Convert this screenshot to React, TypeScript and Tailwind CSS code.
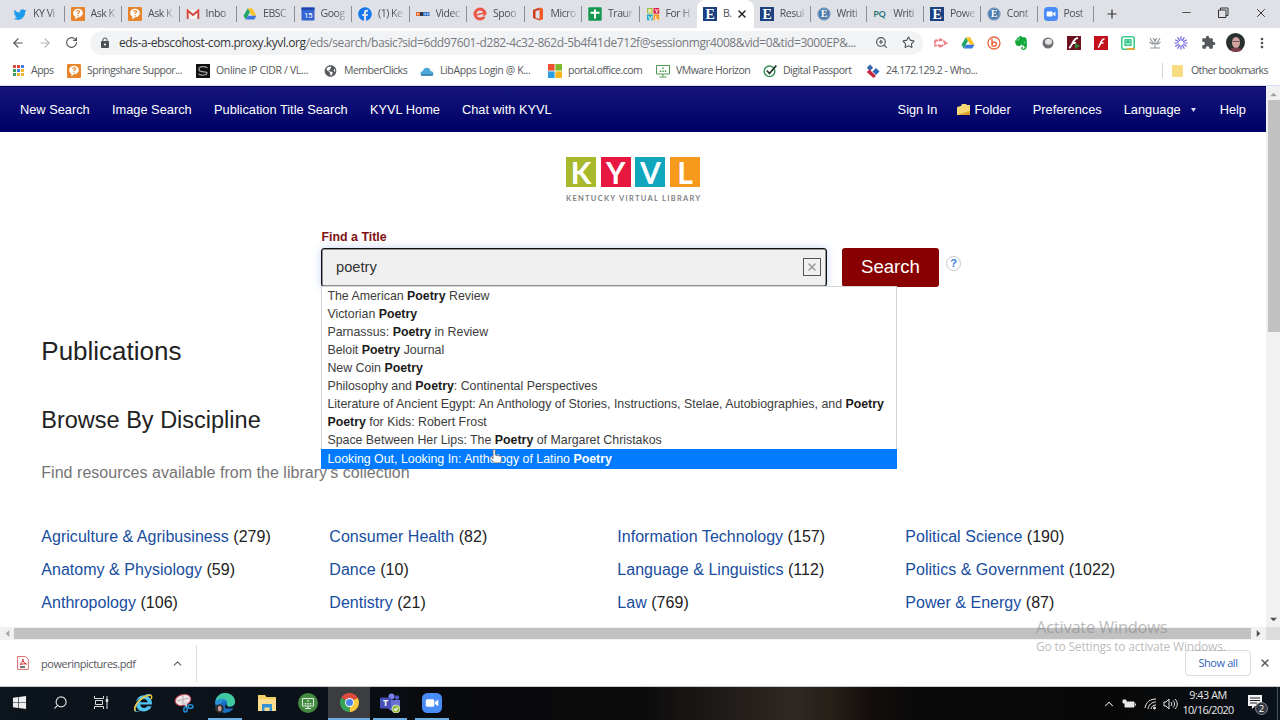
import React from 'react';
import { ArrowLeft, ArrowRight, ChevronUp, Minus, Plus, RotateCw, Search, Star, X, ZoomIn } from 'lucide-react';
import { FaFacebook, FaGlobeAmericas, FaInternetExplorer, FaTwitter, FaWindows } from 'react-icons/fa';
import { MdExtension, MdLock, MdMoreVert } from 'react-icons/md';
import { SiEvernote } from 'react-icons/si';

type Tab = { label: string; icon: React.ReactNode; active?: boolean };

const svg = 'h-[14px] w-[14px] shrink-0';

const AskIcon = () => (
  <svg className={svg} viewBox="0 0 14 14">
    <rect width="14" height="14" rx="1" fill="#e8842c" />
    <path d="M7 1.800c2.900 0 4.800 1.700 4.800 4.200S9.900 10.200 7 10.200L4.400 12.600V9.700C3 9 2.200 7.700 2.200 6 2.200 3.500 4.100 1.800 7 1.800z" fill="#fff" />
    <path d="M5.600 4.700c.2-1.600 3-1.500 2.900.1C8.400 5.800 7 5.800 7 7.100" fill="none" stroke="#e8842c" strokeWidth="1.200" />
    <circle cx="7" cy="8.700" r=".7" fill="#e8842c" />
  </svg>
);

const GmailIcon = () => (
  <svg className={svg} viewBox="0 0 14 14">
    <rect x="1" y="3" width="12" height="9" fill="#f4f1f1" />
    <path d="M1.700 12V3.600L7 8l5.300-4.400V12" fill="none" stroke="#d5473b" strokeWidth="1.900" />
  </svg>
);

const DriveIcon = () => (
  <svg className={svg} viewBox="0 0 14 14">
    <path d="M4.800 1.200L.5 8.700l2.200 3.800L7 5z" fill="#23a566" />
    <path d="M4.800 1.200h4.400l4.300 7.500H9.100z" fill="#fbc52d" />
    <path d="M4.900 8.700h8.600l-2.200 3.800H2.700z" fill="#3f77e0" />
  </svg>
);

const CalendarIcon = () => (
  <svg className={svg} viewBox="0 0 14 14">
    <rect x=".5" y=".5" width="13" height="13" rx="1" fill="#3464d4" />
    <rect x=".5" y=".5" width="13" height="2.500" fill="#1c46ac" />
    <text x="7" y="11" textAnchor="middle" fontSize="8" fontFamily="Roboto, sans-serif" fill="#fff">15</text>
  </svg>
);

const VideoIcon = () => (
  <svg className={svg} viewBox="0 0 14 14">
    <rect y="5" width="4" height="4" fill="#e36b2c" />
    <rect x="4" y="5" width="3" height="4" fill="#33363f" />
    <rect x="7" y="5" width="6.500" height="4" fill="#3d7bd0" />
    <path d="M1 7h2m5.500 0H10m1 0h1.500" stroke="#fff" />
  </svg>
);

const SpoolIcon = () => (
  <svg className={svg} viewBox="0 0 14 14">
    <circle cx="7" cy="7" r="5" fill="none" stroke="#ec5745" strokeWidth="3" />
    <path d="M3 8l8-2" stroke="#ec5745" strokeWidth="1.600" />
    <path d="M10 9.500l4-2.200v3z" fill="#dfe1e6" />
  </svg>
);

const OfficeIcon = () => (
  <svg className={svg} viewBox="0 0 14 14">
    <path d="M8.500.5L2 3v8l6.500 2.500V11.700L4.500 11V4l4-1z" fill="#d13a1c" />
    <path d="M8.500.5L12 1.800v10.400l-3.500 1.300z" fill="#ef5a24" />
  </svg>
);

const SheetsIcon = () => (
  <svg className={svg} viewBox="0 0 14 14">
    <rect x=".3" y=".3" width="13.400" height="13.400" rx="1" fill="#12994f" />
    <path d="M7 2.500v9M2.500 5.800h9" stroke="#fff" strokeWidth="2" />
  </svg>
);

const KyvlIcon = () => (
  <svg className={svg} viewBox="0 0 14 14" fontSize="6" fontFamily="Lato, sans-serif" fontWeight="700" fill="#fff" textAnchor="middle">
    <rect x="1" y="1" width="5.700" height="5.700" fill="#a9bf3a" />
    <rect x="7.500" y="1" width="5.700" height="5.700" fill="#e2203f" />
    <rect x="1" y="7.500" width="5.700" height="5.700" fill="#20a8c2" />
    <rect x="7.500" y="7.500" width="5.700" height="5.700" fill="#f59c20" />
    <text x="3.900" y="6">K</text>
    <text x="10.400" y="6">Y</text>
    <text x="3.900" y="12.500">V</text>
    <text x="10.400" y="12.500">L</text>
  </svg>
);

const EbscoIcon = () => (
  <svg className={svg} viewBox="0 0 14 14">
    <rect width="14" height="14" fill="#1b4180" />
    <text x="7" y="12" textAnchor="middle" fontSize="14" fontWeight="700" fontFamily="Liberation Serif, serif" fill="#fff">E</text>
  </svg>
);

const EbscoRoundIcon = () => (
  <svg className={svg} viewBox="0 0 14 14">
    <circle cx="7" cy="7" r="6.500" fill="#4a79aa" />
    <circle cx="7" cy="7" r="5.600" fill="none" stroke="#8fb2d2" strokeWidth=".7" />
    <text x="7" y="10.300" textAnchor="middle" fontSize="9.500" fontWeight="700" fontFamily="Liberation Serif, serif" fill="#fff">E</text>
  </svg>
);

const PqIcon = () => (
  <span className="w-[14px] shrink-0 text-[9.500px] font-semibold tracking-[-0.500px] text-[#1d7478]">PQ</span>
);

const ZoomIcon = ({ className = svg }: { className?: string }) => (
  <svg className={className} viewBox="0 0 20 20">
    <rect width="20" height="20" rx="5.500" fill="#4a8cf7" />
    <rect x="3.800" y="6.300" width="8.500" height="7.400" rx="1.500" fill="#fff" />
    <path d="M13 9l3.300-2.300v6.600L13 11z" fill="#fff" />
  </svg>
);

const VmIcon = () => (
  <svg className={svg} viewBox="0 0 14 14" fill="none" stroke="#4f9a52">
    <path d="M.5 1.500h13v8.500H.5zM7 10v2.500M3.500 13h7" />
    <path d="M7 3.500v1.500M4.500 6.500v1.500M7 6.500v1.500M9.500 6.500v1.500" strokeWidth="1.500" />
  </svg>
);

const tabs: Tab[] = [
  { label: 'KY Vi', icon: <FaTwitter className="h-[13px] w-[14px] shrink-0 text-[#1c9cea]" /> },
  { label: 'Ask K', icon: <AskIcon /> },
  { label: 'Ask K', icon: <AskIcon /> },
  { label: 'Inbo', icon: <GmailIcon /> },
  { label: 'EBSC', icon: <DriveIcon /> },
  { label: 'Goog', icon: <CalendarIcon /> },
  { label: '(1) Ke', icon: <FaFacebook className="h-[14px] w-[14px] shrink-0 text-[#1578ee]" /> },
  { label: 'Videc', icon: <VideoIcon /> },
  { label: 'Spoo', icon: <SpoolIcon /> },
  { label: 'Micro', icon: <OfficeIcon /> },
  { label: 'Traur', icon: <SheetsIcon /> },
  { label: 'For H', icon: <KyvlIcon /> },
  { label: 'B.', icon: <EbscoIcon />, active: true },
  { label: 'Resul', icon: <EbscoIcon /> },
  { label: 'Writi', icon: <EbscoRoundIcon /> },
  { label: 'Writi', icon: <PqIcon /> },
  { label: 'Powe', icon: <EbscoIcon /> },
  { label: 'Cont', icon: <EbscoRoundIcon /> },
  { label: 'Post', icon: <ZoomIcon /> },
];

const activeIndex = tabs.findIndex((tab) => tab.active);

function TabStrip() {
  return (
    <div className="flex h-7 bg-[#dfe1e6] pl-[7px] text-[10.500px] tracking-[-0.450px] text-[#4b4e53]">
      {tabs.map((tab, i) => {
        const divider = !tab.active && !tabs[i + 1]?.active;
        return (
          <div
            key={i}
            className={`flex shrink-0 items-center pl-[6px] ${i < activeIndex ? 'w-[57.500px]' : 'w-[56.750px]'} ${
              tab.active ? 'rounded-t-lg bg-white' : ''
            }`}
          >
            {tab.icon}
            <span
              className={`ml-[6px] whitespace-nowrap ${
                tab.active ? 'w-[12px]' : 'w-[25px] [mask-image:linear-gradient(to_right,#000_60%,#0003)]'
              }`}
            >
              {tab.label}
            </span>
            {tab.active && <X className="ml-px h-[12px] w-[12px] text-[#202124]" strokeWidth={3} />}
            {divider && <span className="ml-auto h-4 w-px bg-[#8b8d92]" />}
          </div>
        );
      })}
      <Plus className="ml-[11px] mt-[7px] h-[14px] w-[14px] text-[#333]" />
      <div className="ml-auto flex items-start gap-[24px] pr-[12px] pt-[6px] text-[#333]">
        <Minus className="h-[13px] w-[13px]" strokeWidth={1.500} />
        <svg className="h-[13px] w-[13px]" viewBox="0 0 13 13" fill="none" stroke="currentColor">
          <path d="M1.500 4h7.500v7.500H1.500zM3.500 4V2H11v7.500h-2" />
        </svg>
        <X className="h-[14px] w-[14px]" strokeWidth={1.700} />
      </div>
    </div>
  );
}

const extensions: React.ReactNode[] = [
  <svg className={svg} viewBox="0 0 14 14" fill="none" stroke="#ee7780" strokeWidth="1.800">
    <path d="M1 4.500h5M1 4.500v5h5M6 2.500v2.500M6 9v2.500M6 3L12.500 7 6 11" strokeDasharray="3 .8" />
  </svg>,
  <DriveIcon />,
  <svg className={svg} viewBox="0 0 14 14" fill="none" stroke="#e8663e" strokeWidth="1.300">
    <circle cx="7" cy="7" r="6" />
    <path d="M5 3v6.500c1.500 1.500 4.500.8 4.500-1.500S6.500 5.500 5.500 7.500" strokeWidth="1.500" />
  </svg>,
  <SiEvernote className="h-[14px] w-[14px] text-[#12a83c]" />,
  <svg className={svg} viewBox="0 0 14 14">
    <circle cx="7" cy="7" r="5.500" fill="#6e7073" />
    <ellipse cx="7.500" cy="5.800" rx="3.500" ry="3" fill="#e3e4e6" />
  </svg>,
  <svg className={svg} viewBox="0 0 14 14">
    <rect width="14" height="14" fill="#6f1220" />
    <path d="M2 12C5 11 6 2 11 2M5 7h4" fill="none" stroke="#fff" strokeWidth="1.800" />
    <path d="M8 7l5 3-5 3z" fill="#2d8a3b" />
  </svg>,
  <svg className={svg} viewBox="0 0 14 14">
    <rect width="14" height="14" fill="#c3121c" />
    <path d="M4 11.500C6.500 11 6 3 10.500 3M6 7h3.500" fill="none" stroke="#fff" strokeWidth="1.600" />
  </svg>,
  <svg className={svg} viewBox="0 0 14 14">
    <rect x=".8" y=".8" width="12.400" height="12.400" rx="2" fill="#fff" stroke="#3cc98d" strokeWidth="1.600" />
    <rect x="3.200" y="3" width="7.600" height="7" rx="1" fill="#3cc98d" />
    <path d="M5 4.500v1M9 4.500v1M4.800 7c.8 1.800 3.600 1.800 4.400 0" fill="none" stroke="#fff" />
    <path d="M6 13h8" stroke="#efa22f" strokeWidth="1.800" />
  </svg>,
  <svg className={svg} viewBox="0 0 14 14" fill="none" stroke="#8f9698" strokeWidth="1.100">
    <path d="M7 3v9M2 2l3 5 2 1 2-1 3-5M1.500 6L5 8.500M12.500 6L9 8.500M2 12h10M5 2l2 3 2-3" />
  </svg>,
  <svg className={svg} viewBox="0 0 14 14" fill="none" stroke="#6d62de" strokeWidth="1.200">
    <path d="M7 .3v4.200M7 9.500v4.200M.3 7h4.200M9.500 7h4.200M3.650 1.200l2.100 3.630M8.250 9.170l2.100 3.630M1.200 3.650l3.630 2.100M9.170 8.250l3.630 2.100M1.200 10.350l3.630-2.100M9.170 5.750l3.630-2.100M3.650 12.800l2.100-3.630M8.250 4.830l2.100-3.630" />
  </svg>,
  <MdExtension className="h-[15px] w-[15px] text-[#55585c]" />,
];

function Toolbar() {
  return (
    <div className="flex h-[29px] items-center bg-white text-[#4d5054]">
      <ArrowLeft className="ml-[11px] h-[14px] w-[14px]" />
      <ArrowRight className="ml-[13px] h-[14px] w-[14px] text-[#b3b5b8]" />
      <RotateCw className="ml-[13px] h-[13px] w-[13px]" />
      <div className="ml-[12px] flex h-[24px] w-[833px] items-center rounded-full bg-[#f2f3f5]">
        <MdLock className="ml-[9px] h-[12px] w-[12px]" />
        <span className="ml-[8px] w-[740px] whitespace-nowrap text-[12px] tracking-[-0.410px] text-[#77797d]">
          <span className="text-[#35373a]">eds-a-ebscohost-com.proxy.kyvl.org</span>
          /eds/search/basic?sid=6dd97601-d282-4c32-862d-5b4f41de712f@sessionmgr4008&amp;vid=0&amp;tid=3000EP&amp;...
        </span>
        <ZoomIn className="ml-[16px] h-[13px] w-[13px] shrink-0" />
        <Star className="ml-[14px] h-[13px] w-[13px] shrink-0" />
      </div>
      <div className="ml-[11px] flex items-center gap-[12.700px]">
        {extensions.map((ext, i) => (
          <React.Fragment key={i}>{ext}</React.Fragment>
        ))}
      </div>
      <svg className="ml-[10px] h-[19px] w-[19px]" viewBox="0 0 19 19">
        <circle cx="9.500" cy="9.500" r="9.500" fill="#29312e" />
        <ellipse cx="10" cy="9.500" rx="4" ry="5.500" fill="#d4a3a0" />
        <path d="M4 17c2-3 10-3 12 0-3 2.500-9 2.500-12 0z" fill="#7d3e4c" />
        <path d="M6.500 8.500h7" stroke="#5d4546" strokeWidth=".8" />
      </svg>
      <MdMoreVert className="ml-[9px] h-[16px] w-[16px]" />
    </div>
  );
}

function Bookmarks() {
  return (
    <div className="flex h-[29px] items-center whitespace-nowrap border-b border-[#d9dcfb] bg-white pb-px text-[10.500px] tracking-[-0.500px] text-[#55585c]">
      <div className="ml-[13px] flex w-[54px] items-center gap-[7px]">
        <svg className="h-[11px] w-[11px]" viewBox="0 0 11 11">
          <path d="M0 1.500h3M4 1.500h3" stroke="#dd4b3e" strokeWidth="3" />
          <path d="M8 1.500h3M4 5.500h3" stroke="#4b7fd9" strokeWidth="3" />
          <path d="M0 5.500h3M0 9.500h3" stroke="#38a05a" strokeWidth="3" />
          <path d="M8 5.500h3M4 9.500h7" stroke="#ecb431" strokeWidth="3" strokeDasharray="3 1" />
        </svg>
        Apps
      </div>
      <div className="flex w-[129px] items-center gap-[6px]">
        <AskIcon />
        Springshare Suppor...
      </div>
      <div className="flex w-[128px] items-center gap-[6px] tracking-[-0.350px]">
        <svg className={svg} viewBox="0 0 14 14">
          <rect width="14" height="14" fill="#111" />
          <path d="M11.500 4C7 1.500 2 3 3 6s8 1 8 3-5 3-8.500 1" fill="none" stroke="#a7a7a7" strokeWidth="1.200" />
        </svg>
        Online IP CIDR / VL...
      </div>
      <div className="flex w-[96px] items-center gap-[7px]">
        <FaGlobeAmericas className="h-[12px] w-[13px] text-[#56595d]" />
        MemberClicks
      </div>
      <div className="flex w-[128px] items-center gap-[6px] tracking-[-0.380px]">
        <svg className={svg} viewBox="0 0 14 14">
          <path d="M3 11.500C-.5 11.500 0 7 3 7c.5-4 7-4.500 7.500 0C14 7 14.500 11.500 11 11.500z" fill="#4ea7d9" />
          <path d="M1 11h12" stroke="#357cae" strokeWidth="1.500" />
        </svg>
        LibApps Login @ K...
      </div>
      <div className="flex w-[108px] items-center gap-[6px]">
        <svg className={svg} viewBox="0 0 14 14">
          <rect width="6.600" height="6.600" fill="#ec5130" />
          <rect x="7.400" width="6.600" height="6.600" fill="#7eb82d" />
          <rect y="7.400" width="6.600" height="6.600" fill="#2b9de3" />
          <rect x="7.400" y="7.400" width="6.600" height="6.600" fill="#f8b61a" />
        </svg>
        portal.office.com
      </div>
      <div className="flex w-[107px] items-center gap-[6px]">
        <VmIcon />
        VMware Horizon
      </div>
      <div className="flex w-[103px] items-center gap-[6px]">
        <svg className={svg} viewBox="0 0 14 14" fill="none">
          <circle cx="6.500" cy="7.300" r="5.300" stroke="#308d54" strokeWidth="1.400" />
          <path d="M3.800 6.500L6.500 9.500l6.800-8" stroke="#1d3328" strokeWidth="1.700" />
        </svg>
        Digital Passport
      </div>
      <div className="flex w-[120px] items-center gap-[6px]">
        <svg className={svg} viewBox="0 0 14 14">
          <path d="M4 .5l3.200 3.200L4 6.900.8 3.700z" fill="#3565ab" />
          <path d="M10 4l3.500 3.500L10 11 6.500 7.500z" fill="#2b68b5" />
          <path d="M3.500 5.500L10 12l-2.500 2L.8 8z" fill="#c8233c" />
        </svg>
        24.172.129.2 - Who...
      </div>
      <div className="ml-auto flex w-[118px] items-center border-l border-[#d3d5d8] pl-[9px] tracking-[-0.620px]">
        <span className="mr-[8px] h-[12px] w-[11px] rounded-[1px] bg-[#f7dc82]" />
        <span>Other bookmarks</span>
      </div>
    </div>
  );
}

function SiteNav() {
  return (
    <nav className="flex h-[46px] items-center border-t border-[#02024c] bg-linear-to-b from-[#15157a] to-[#000066] pl-[20px] pr-[20px] text-[12.800px] text-white">
      <span className="w-[92px]">New Search</span>
      <span className="w-[102px]">Image Search</span>
      <span className="w-[156px]">Publication Title Search</span>
      <span className="w-[92px]">KYVL Home</span>
      <span>Chat with KYVL</span>
      <span className="ml-auto">Sign In</span>
      <span className="ml-[20px] flex items-center gap-[3px]">
        <svg className="h-[13px] w-[14px]" viewBox="0 0 14 13">
          <path d="M0 4l4-1 1-2h4l1 1h3v10H0z" fill="#f3d873" />
          <path d="M0 12L13 8v4z" fill="#dba52d" />
        </svg>
        Folder
      </span>
      <span className="ml-[22px]">Preferences</span>
      <span className="ml-[22px] flex items-center">
        Language
        <svg className="ml-[10px] h-[4px] w-[5px]" viewBox="0 0 5 4">
          <path d="M0 0h5L2.500 4z" fill="#dcdcf2" />
        </svg>
      </span>
      <span className="ml-[24px]">Help</span>
    </nav>
  );
}

const suggestions: [string, string][] = [
  ['The American ', ' Review'],
  ['Victorian ', ''],
  ['Parnassus: ', ' in Review'],
  ['Beloit ', ' Journal'],
  ['New Coin ', ''],
  ['Philosophy and ', ': Continental Perspectives'],
  ['Literature of Ancient Egypt: An Anthology of Stories, Instructions, Stelae, Autobiographies, and ', ''],
  ['', ' for Kids: Robert Frost'],
  ['Space Between Her Lips: The ', ' of Margaret Christakos'],
];

function SuggestionMenu() {
  return (
    <ul className="absolute left-0 top-full z-10 -mt-px w-[576px] whitespace-nowrap border border-[#d4d4d8] bg-white text-[12.370px] text-[#3c3c3c]">
      {suggestions.map(([before, after]) => (
        <li key={before + after} className="h-[18px] whitespace-pre pl-[5.400px] leading-[19px]">
          {before}
          <b className="text-[#1b1b1b]">Poetry</b>
          {after}
        </li>
      ))}
      <li className="-mx-px -mb-px h-[20px] bg-[#007bff] pl-[6.400px] leading-[21px] text-white">
        Looking Out, Looking In: Anthology of Latino <b>Poetry</b>
      </li>
      <svg className="absolute left-[167px] top-[161px] h-[19px] w-[14px]" viewBox="0 0 14 19">
        <path
          d="M4 9V2.500C4 .8 6.300.8 6.300 2.500V7l5 1c1.200.3 1.500 1 1.300 2.200L11.800 15H5.500L1 10.500C.2 9.300 1.500 8.500 2.500 9.300L4 10.500z"
          fill="#fff"
          stroke="#59606b"
          strokeWidth=".8"
        />
      </svg>
    </ul>
  );
}

const logo = [
  { letter: 'K', color: 'bg-[#a9b92c]' },
  { letter: 'Y', color: 'bg-[#e8173f]' },
  { letter: 'V', color: 'bg-[#10a6bd]' },
  { letter: 'L', color: 'bg-[#f69a1d]' },
];

function Logo() {
  return (
    <div className="ml-[566px] mt-[25px] w-[136px] font-['Lato',sans-serif]">
      <div className="flex gap-[4.700px]">
        {logo.map(({ letter, color }) => (
          <span
            key={letter}
            className={`flex h-[30px] w-[30px] items-center justify-center text-[30px] font-bold leading-[28px] text-white ${color}`}
          >
            {letter}
          </span>
        ))}
      </div>
      <p className="mt-[6px] whitespace-nowrap text-[7.500px] font-bold leading-[11px] tracking-[1.280px] text-[#808184]">
        KENTUCKY VIRTUAL LIBRARY
      </p>
    </div>
  );
}

const disciplines: [string, number][][] = [
  [['Agriculture & Agribusiness', 279], ['Anatomy & Physiology', 59], ['Anthropology', 106]],
  [['Consumer Health', 82], ['Dance', 10], ['Dentistry', 21]],
  [['Information Technology', 157], ['Language & Linguistics', 112], ['Law', 769]],
  [['Political Science', 190], ['Politics & Government', 1022], ['Power & Energy', 87]],
];

function SearchPage() {
  return (
    <main className="flex h-[495px] flex-col overflow-hidden bg-white">
      <Logo />
      <div className="ml-[321px] mt-[24px]">
        <p className="h-[17px] pl-[0.500px] text-[12.400px] font-bold leading-[18px] text-[#7d1010]">Find a Title</p>
        <div className="relative mt-[3px] flex h-[39px]">
          <div className="flex w-[506px] items-center rounded-[3px] border border-[#111] bg-[#f0f0f0] pb-px pl-[14px] pr-[5px] text-[14.700px] text-[#333] shadow-[0_0_9px_rgba(120,160,230,0.450),inset_0_0_0_0.500px_#333]">
            poetry
            <span className="ml-auto flex h-[18px] w-[18px] items-center justify-center border border-[#555]">
              <X className="h-[12px] w-[12px] text-[#999]" strokeWidth={3} />
            </span>
          </div>
          <button type="button" className="ml-[15px] w-[97px] rounded-[3px] bg-[#880000] pb-[2px] text-[18.600px] text-white">
            Search
          </button>
          <span className="ml-[7px] mt-[8px] flex h-[15px] w-[15px] items-center justify-center rounded-full border border-[#c4c8ce] text-[11px] font-bold text-[#3d7edb]">
            ?
          </span>
          <SuggestionMenu />
        </div>
      </div>
      <div className="ml-[41.300px] text-[#222]">
        <h1 className="mt-[48px] h-[32px] text-[26px] leading-[32px]">Publications</h1>
        <h2 className="mt-[38px] h-[30px] text-[23.500px] leading-[30px]">Browse By Discipline</h2>
        <p className="mt-[28px] h-[20px] text-[16px] leading-[20px] tracking-[0.030px] text-[#757575]">
          Find resources available from the library&apos;s collection
        </p>
        <div className="mt-[36.500px] flex">
          {disciplines.map((column, i) => (
            <ul key={i} className="w-[288px] shrink-0 text-[16px] leading-[33.300px] tracking-[0.030px]">
              {column.map(([name, count]) => (
                <li key={name}>
                  <a className="text-[#174da0]">{name}</a> ({count})
                </li>
              ))}
            </ul>
          ))}
        </div>
      </div>
    </main>
  );
}

function DownloadsBar() {
  return (
    <div className="flex h-[47px] items-center border-b border-[#c9cacc] bg-white text-[11px] tracking-[-0.470px] text-[#55585c]">
      <div className="flex h-[37px] w-[197px] items-center border-r border-[#dcdddf] pl-[17px]">
        <svg className="h-[14px] w-[12px]" viewBox="0 0 12 14">
          <path d="M.6.6H8.500L11.400 3.500V13.400H.6z" fill="#fff" stroke="#dc6c6c" />
          <path d="M3 8.500C5 7 6 4.500 5.800 3c.2 2.500 1.500 4.500 3.700 5-2-.4-4.500 0-6.500.5z" fill="none" stroke="#cf2328" />
          <path d="M3 11h5" stroke="#444" strokeWidth="1.500" />
        </svg>
        <span className="ml-[12px] mt-[2px]">powerinpictures.pdf</span>
        <ChevronUp className="ml-auto mr-[12px] h-[13px] w-[13px]" />
      </div>
      <span className="ml-auto flex h-[26px] w-[66px] items-center justify-center rounded-[4px] border border-[#dadce0] tracking-[-0.400px] text-[#2f5fb8]">
        Show all
      </span>
      <X className="ml-[8px] mr-[9px] h-[12px] w-[12px]" strokeWidth={2.800} />
    </div>
  );
}

const taskIcon = 'h-[20px] w-[20px]';

const apps: { icon: React.ReactNode; open?: boolean; focused?: boolean }[] = [
  { icon: <FaWindows className="h-[15px] w-[15px] text-[#eee]" /> },
  { icon: <Search className="h-[15px] w-[15px] -scale-x-100 text-[#ddd]" strokeWidth={1.900} /> },
  {
    icon: (
      <svg className="h-[15px] w-[15px]" viewBox="0 0 15 15" fill="none" stroke="#ddd">
        <path d="M.5 1v2.500h9V1M1.500 5.500h7v4h-7zM.5 14v-2.500h9V14M13 1v13" />
        <path d="M13 4v3" strokeWidth="2.500" />
      </svg>
    ),
  },
  {
    icon: (
      <span className="relative">
        <FaInternetExplorer className="h-[18px] w-[18px] text-[#52c4f2]" />
        <svg className="absolute -left-px -top-px h-[20px] w-[20px]" viewBox="0 0 21 20">
          <path d="M3 18C-1 17 5 7 12 3.500 18 .5 21 1.500 19 6" fill="none" stroke="#f2c331" strokeWidth="1.600" />
        </svg>
      </span>
    ),
  },
  {
    icon: (
      <svg className={taskIcon} viewBox="0 0 20 20">
        <ellipse cx="9" cy="7" rx="8" ry="5.500" fill="#ece6e8" stroke="#c43b4d" transform="rotate(-14 9 7)" />
        <path d="M3 8l12-3M9 2v10" stroke="#b9a7ac" />
        <path d="M10 9l3 6M13 9l-1 6" stroke="#c9ced4" strokeWidth="1.400" />
        <ellipse cx="11.500" cy="16.500" rx="1.700" ry="2.500" fill="none" stroke="#238bd0" strokeWidth="1.500" />
        <ellipse cx="16.500" cy="13.500" rx="2.500" ry="1.800" fill="none" stroke="#238bd0" strokeWidth="1.500" />
      </svg>
    ),
  },
  {
    open: true,
    icon: (
      <svg className={taskIcon} viewBox="0 0 20 20">
        <circle cx="10" cy="10" r="10" fill="#1b6fbf" />
        <path d="M.3 8.500C1.500 2.500 6 0 10 0c6 0 10 4 10 8.500 0 3.500-2.500 5-5.500 5-2 0-3-.8-2.500-2C13.500 7 7 4 .3 8.500z" fill="#3fcaa0" />
        <path d="M.3 8.500C4 4.500 11 4.500 12.500 9 9 6.500 5 9 5.500 13 2 13 0 11 .3 8.500z" fill="#2794d7" />
        <path d="M12 11.500c-.5 1.500.5 2.500 2.500 2.500 2 0 4-.7 5.500-3v4.500h-9C9.500 14 10 11.500 12 11.500z" fill="#10171f" />
        <circle cx="4.500" cy="15.500" r="4.300" fill="#34302f" />
        <ellipse cx="4.700" cy="15.500" rx="1.900" ry="2.700" fill="#c69f9b" />
      </svg>
    ),
  },
  {
    icon: (
      <svg className={taskIcon} viewBox="0 0 20 20">
        <path d="M1 2h7l1.500 2H19v14H1z" fill="#f6ce66" />
        <path d="M1 6h18v12H1z" fill="#fbdf8e" />
        <path d="M5 18v-7h10v7h-2.500v-3.500h-5V18z" fill="#3594d8" />
      </svg>
    ),
  },
  {
    icon: (
      <svg className={taskIcon} viewBox="0 0 20 20" fill="none" stroke="#e6f2e3">
        <circle cx="10" cy="10" r="10" fill="#428b41" stroke="none" />
        <path d="M4.500 5.500h11v7.500h-11zM10 13v2M7 15.500h6" />
        <path d="M10 7v1.500M7.500 10v1.500M10 10v1.500M12.500 10v1.500" strokeWidth="1.500" />
      </svg>
    ),
  },
  {
    open: true,
    focused: true,
    icon: (
      <svg className="h-[19px] w-[19px]" viewBox="0 0 20 20">
        <path d="M10 10L1.340 5A10 10 0 0118.660 5z" fill="#dd4b3e" />
        <path d="M10 10L18.660 5A10 10 0 0110 20z" fill="#fbcb3d" />
        <path d="M10 10v10A10 10 0 011.340 5z" fill="#36a457" />
        <path d="M10 5.500h8.900L18.660 5 10 1z" fill="#dd4b3e" />
        <circle cx="10" cy="10" r="4.700" fill="#fff" />
        <circle cx="10" cy="10" r="3.700" fill="#4a86e8" />
      </svg>
    ),
  },
  {
    open: true,
    icon: (
      <svg className={taskIcon} viewBox="0 0 20 20">
        <circle cx="11.500" cy="3.500" r="3" fill="#7b83eb" />
        <circle cx="17" cy="4.500" r="2.200" fill="#5059c9" />
        <path d="M7 7h13v5c0 4-3 6-6 6s-7-2-7-6z" fill="#6970d3" />
        <rect y="4.500" width="11" height="11" rx="1" fill="#464eb8" />
        <text x="5.500" y="13" textAnchor="middle" fontSize="9" fontWeight="700" fontFamily="Open Sans, sans-serif" fill="#fff">T</text>
        <circle cx="16" cy="16" r="4" fill="#8fb93a" stroke="#e7efdc" strokeWidth=".7" />
        <path d="M14 16l1.500 1.500L18 14.700" fill="none" stroke="#fff" strokeWidth="1.200" />
      </svg>
    ),
  },
  { open: true, icon: <ZoomIcon className={taskIcon} /> },
];

function Taskbar() {
  return (
    <div className="flex h-[33px] bg-[linear-gradient(90deg,#0c141c_0%,#0b1118_25%,#08090b_36%,#0b0b0c_50%,#191513_54%,#2e2823_62%,#261e17_65%,#130e0d_68%,#090909_72%,#080808_88%,#0a121b_100%)] text-[#e8e8e8]">
      {apps.map(({ icon, open, focused }, i) => (
        <div
          key={i}
          className={`flex w-[41.300px] shrink-0 flex-col items-center first:w-[39.400px] ${focused ? 'bg-[#3b3d40]' : ''}`}
        >
          <span className="flex h-[31px] items-center justify-center">{icon}</span>
          {open && <span className={`h-[2px] bg-[#6caee4] ${focused ? 'w-full' : 'w-[34px]'}`} />}
        </div>
      ))}
      <div className="ml-auto flex items-center">
        <ChevronUp className="h-[14px] w-[14px]" strokeWidth={1.800} />
        <svg className="ml-[6px] h-[14px] w-[14px]" viewBox="0 0 14 14" fill="none" stroke="currentColor">
          <path d="M3 5h9v5H3zM1 3h3v3H1z" fill="currentColor" />
          <path d="M13.500 6.500v2" />
        </svg>
        <svg className="ml-[8px] h-[13px] w-[13px]" viewBox="0 0 13 13" fill="none" stroke="currentColor">
          <path d="M1 11C2 5 6 2 12 2M4 12c.5-4 3.500-7 8-7M7 12c.5-2.500 2-4 5-4" />
          <circle cx="10.500" cy="11" r="1" fill="currentColor" />
        </svg>
        <svg className="ml-[6px] h-[14px] w-[15px]" viewBox="0 0 15 14" fill="none" stroke="currentColor">
          <path d="M1 5h2l3-3v10L3 9H1zM8 5c1 1 1 3 0 4M10 3.500c2 2 2 5 0 7M12 2c3 3 3 7 0 10" />
        </svg>
        <div className="ml-[3px] w-[54px] whitespace-nowrap pb-[3px] text-center text-[10.800px] leading-[15px] tracking-[-0.620px]">
          <div className="tracking-[-0.450px]">9:43 AM</div>
          <div>10/16/2020</div>
        </div>
        <svg className="ml-[12px] mr-[8px] h-[22px] w-[22px]" viewBox="0 0 22 22">
          <path d="M1 2h14v11H8l-3 3v-3H1z" fill="#f3f3f3" />
          <path d="M3 5h10M3 7.500h10M3 10h7" stroke="#20242a" />
          <circle cx="14.500" cy="15.500" r="6" fill="#333840" stroke="#80858c" />
          <text x="14.500" y="19" textAnchor="middle" fontSize="9.500" fontFamily="Open Sans, sans-serif" fill="#fff">2</text>
        </svg>
        <span className="mr-[2px] h-[33px] w-px bg-[#4a5058]" />
      </div>
    </div>
  );
}

const Arrow = ({ d, color = '#505050' }: { d: string; color?: string }) => (
  <svg className="h-[7px] w-[7px]" viewBox="0 0 8 8">
    <path d={d} fill={color} />
  </svg>
);

export default function App() {
  return (
    <div className="relative h-[720px] w-[1280px] overflow-hidden bg-white font-['Liberation_Sans',Arial,sans-serif]">
      <div className="font-['Open_Sans',sans-serif] [font-stretch:92%]">
        <TabStrip />
        <Toolbar />
        <Bookmarks />
      </div>
      <div className="flex">
        <div className="w-[1266px]">
          <SiteNav />
          <SearchPage />
        </div>
        <div className="flex w-[14px] flex-col items-center bg-[#f1f1f1] pt-[5px]">
          <Arrow d="M0 6l4-4 4 4z" color="#a3a3a3" />
          <div className="ml-[2px] mt-[2px] h-[232px] w-[12px] bg-[#c1c1c1]" />
          <div className="mb-[4px] mt-auto flex">
            <Arrow d="M0 2l4 4 4-4z" />
          </div>
        </div>
      </div>
      <div className="flex h-[13px] items-center bg-[#f1f1f1]">
        <div className="flex w-[14px] justify-center">
          <Arrow d="M6 0L2 4l4 4z" color="#a3a3a3" />
        </div>
        <div className="h-[11px] w-[1237px] bg-[#c1c1c1]" />
        <div className="flex w-[15px] justify-center">
          <Arrow d="M2 0l4 4-4 4z" />
        </div>
        <div className="h-full w-[14px] bg-[#dcdcdc]" />
      </div>
      <div className="font-['Open_Sans',sans-serif] [font-stretch:92%]">
        <DownloadsBar />
        <Taskbar />
      </div>
      <div className="absolute left-[1036px] top-[615px] whitespace-nowrap font-['Open_Sans',sans-serif] text-[#8b8b8b]/60">
        <p className="text-[16.500px] leading-[24px] tracking-[-0.250px]">Activate Windows</p>
        <p className="text-[12px] leading-[15px] tracking-[-0.200px]">Go to Settings to activate Windows.</p>
      </div>
    </div>
  );
}
